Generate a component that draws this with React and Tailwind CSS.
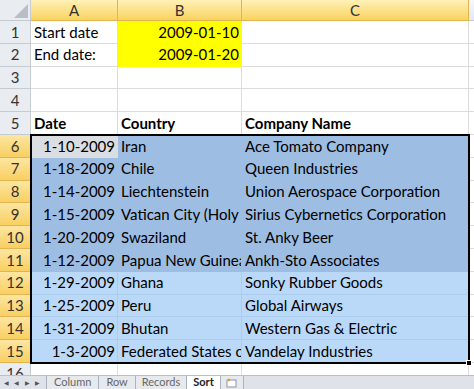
import React from "react";

const data = [
  ["1-10-2009", "Iran", "Ace Tomato Company"],
  ["1-18-2009", "Chile", "Queen Industries"],
  ["1-14-2009", "Liechtenstein", "Union Aerospace Corporation"],
  ["1-15-2009", "Vatican City (Holy See)", "Sirius Cybernetics Corporation"],
  ["1-20-2009", "Swaziland", "St. Anky Beer"],
  ["1-12-2009", "Papua New Guinea", "Ankh-Sto Associates"],
  ["1-29-2009", "Ghana", "Sonky Rubber Goods"],
  ["1-25-2009", "Peru", "Global Airways"],
  ["1-31-2009", "Bhutan", "Western Gas & Electric"],
  ["1-3-2009", "Federated States of Micronesia", "Vandelay Industries"],
];

const RowHead = ({ n, sel, top }) => (
  <div
    className={
      "w-[31px] shrink-0 flex justify-center border-r border-b text-[15px] text-[#333] " +
      (top ? "items-start pt-[3px] leading-none " : "items-center ") +
      (sel
        ? "bg-gradient-to-b from-[#fde6a0] to-[#f8cf5f] border-[#e2b552]"
        : "bg-[#e9ecf0] border-[#c5cbd3]")
    }
  >
    {n}
  </div>
);

const Cell = ({ className, children }) => (
  <div
    className={
      "shrink-0 flex items-center overflow-hidden whitespace-nowrap border-r border-b " + className
    }
  >
    {children}
  </div>
);

const Row = ({ n, sel, top, children }) => (
  <div className="flex h-[22.8px]">
    <RowHead n={n} sel={sel} top={top} />
    {children}
    <div className="flex-1 border-b border-[#dadcdd] bg-white"></div>
  </div>
);

const Empty = () => (
  <>
    <Cell className="w-[87px] border-[#dadcdd]"></Cell>
    <Cell className="w-[124px] border-[#dadcdd]"></Cell>
    <Cell className="w-[227px] border-[#dadcdd]"></Cell>
  </>
);

const App = () => {
  return (
    <div
      className="w-[474px] h-[389px] overflow-hidden bg-white relative text-black"
      style={{ fontFamily: "Lato, 'Liberation Sans', sans-serif" }}
    >
      {/* column headers */}
      <div className="flex h-[21px]">
        <div className="w-[31px] shrink-0 bg-[#e9ecf0] border-r border-b border-[#c5cbd3] relative">
          <div className="absolute right-[2px] bottom-[2px] w-0 h-0 border-l-[14px] border-l-transparent border-b-[14px] border-b-[#b9bec6]"></div>
        </div>
        {[
          ["A", "w-[87px]"],
          ["B", "w-[124px]"],
          ["C", "w-[227px]"],
        ].map(([l, w]) => (
          <div
            key={l}
            className={
              w +
              " shrink-0 flex items-center justify-center border-r border-b border-[#e2b552] bg-gradient-to-b from-[#fff0b5] to-[#f9d35c] text-[15px] text-[#333]"
            }
          >
            {l}
          </div>
        ))}
        <div className="flex-1 bg-gradient-to-b from-[#f6f8fa] to-[#e4e8ee] border-b border-[#c5cbd3]"></div>
      </div>

      <Row n={1}>
        <Cell className="w-[87px] pl-[3px] border-[#dadcdd] text-[15px]">Start date</Cell>
        <Cell className="w-[124px] pr-[2px] justify-end bg-[#ffff00] border-[#ffff00] text-[15px]">2009-01-10</Cell>
        <Cell className="w-[227px] border-[#dadcdd]"></Cell>
      </Row>
      <Row n={2}>
        <Cell className="w-[87px] pl-[3px] border-[#dadcdd] text-[15px]">End date:</Cell>
        <Cell className="w-[124px] pr-[2px] justify-end bg-[#ffff00] border-[#ffff00] text-[15px]">2009-01-20</Cell>
        <Cell className="w-[227px] border-[#dadcdd]"></Cell>
      </Row>
      <Row n={3}>
        <Empty />
      </Row>
      <Row n={4}>
        <Empty />
      </Row>
      <Row n={5}>
        <Cell className="w-[87px] pl-[3px] border-[#dadcdd] text-[15px] font-bold">Date</Cell>
        <Cell className="w-[124px] pl-[3px] border-[#dadcdd] text-[15px] font-bold">Country</Cell>
        <Cell className="w-[227px] pl-[3px] border-[#dadcdd] text-[15px] font-bold">Company Name</Cell>
      </Row>

      {data.map((r, i) => {
        const dark = i < 6;
        const bg = dark ? "bg-[#9dbde3] border-[#9dbde3]" : "bg-[#bad9f8] border-[#acccee]";
        return (
          <Row key={i} n={i + 6} sel>
            <Cell
              className={
                "w-[87px] pr-[2px] justify-end text-[15px] " +
                (i === 0 ? "bg-[#dadee3] border-[#dadee3]" : bg)
              }
            >
              {r[0]}
            </Cell>
            <Cell className={"w-[124px] pl-[3px] text-[15px] " + bg}>{r[1]}</Cell>
            <Cell className={"w-[227px] pl-[3px] text-[15px] " + bg}>{r[2]}</Cell>
          </Row>
        );
      })}

      {/* row 16 partial */}
      <Row n={16} top>
        <Empty />
      </Row>

      {/* selection border overlay */}
      <div className="absolute left-[30px] top-[134px] w-[440px] h-[230px] border-2 border-black pointer-events-none"></div>
      <div className="absolute left-[466px] top-[360px] w-[6px] h-[6px] bg-black border border-white pointer-events-none"></div>

      {/* sheet tabs */}
      <div className="absolute left-0 right-0 top-[375px] h-[14px] flex items-center bg-[#dfe3e9] border-t border-[#b9c0ca] text-[11px] text-[#444]">
        <div className="flex items-center justify-between pl-[4px] pr-[6px] w-[46px] text-[6px] leading-none text-[#555]">
          <span>◀</span>
          <span>◀</span>
          <span>▶</span>
          <span>▶</span>
        </div>
        <div className="flex items-stretch h-full">
          <div className="px-[7px] border-l border-[#aab2bd] bg-[#e6e9ee] flex items-center text-[#666]">Column</div>
          <div className="px-[7px] border-l border-[#aab2bd] bg-[#e6e9ee] flex items-center text-[#666]">Row</div>
          <div className="px-[6px] border-l border-[#aab2bd] bg-[#e6e9ee] flex items-center text-[#666]">Records</div>
          <div className="px-[6px] border-l border-[#aab2bd] bg-white flex items-center font-bold text-[#222]">Sort</div>
          <div className="px-[5px] border-l border-r border-[#aab2bd] bg-[#e6e9ee] flex items-center">
            <svg width="12" height="10" viewBox="0 0 12 10">
              <rect x="1" y="2" width="9" height="7" fill="#fff" stroke="#8a96a6" />
              <path d="M2 1 L4 3 M4 1 L2 3" stroke="#e0a000" strokeWidth="1.2" />
            </svg>
          </div>
        </div>
      </div>
    </div>
  );
};

export default App;
